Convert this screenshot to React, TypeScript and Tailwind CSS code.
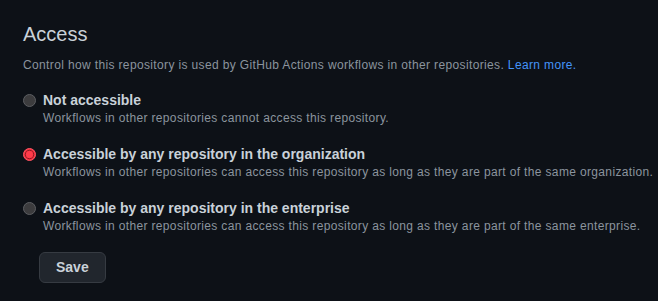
import { useState } from "react";

const options = [
  {
    id: "none",
    label: "Not accessible",
    description: "Workflows in other repositories cannot access this repository.",
  },
  {
    id: "organization",
    label: "Accessible by any repository in the organization",
    description:
      "Workflows in other repositories can access this repository as long as they are part of the same organization.",
  },
  {
    id: "enterprise",
    label: "Accessible by any repository in the enterprise",
    description:
      "Workflows in other repositories can access this repository as long as they are part of the same enterprise.",
  },
];

function Radio({ checked }: { checked: boolean }) {
  if (checked) {
    return (
      <svg width="13" height="13" viewBox="0 0 13 13" className="shrink-0">
        <circle cx="6.5" cy="6.5" r="6" fill="#f2303f" stroke="#ff5563" strokeWidth="1" />
        <circle cx="6.5" cy="6.5" r="4.2" fill="none" stroke="#8f1a23" strokeWidth="1" />
        <circle cx="6.5" cy="6.5" r="3.4" fill="#ff3b4a" />
      </svg>
    );
  }
  return (
    <svg width="13" height="13" viewBox="0 0 13 13" className="shrink-0">
      <circle cx="6.5" cy="6.5" r="6" fill="#3c3c3e" stroke="#5d5f63" strokeWidth="1" />
    </svg>
  );
}

export default function App() {
  const [selected, setSelected] = useState("organization");

  return (
    <div className="min-h-[301px] w-[658px] bg-[#0d1117] pl-[23px] pt-[19px] font-['Liberation_Sans',sans-serif]">
      {/* Header */}
      <h2 className="text-[20px] leading-[30px] text-[#c9d1d9]">Access</h2>
      <p className="mt-[7px] text-[12px] leading-[18px] tracking-[0.36px] text-[#8b949e]">
        Control how this repository is used by GitHub Actions workflows in other repositories.{" "}
        <a href="#" className="text-[#4493f8]">
          Learn more.
        </a>
      </p>

      {/* Options */}
      <div className="mt-[17px] flex flex-col gap-[19px]">
        {options.map((opt) => (
          <label key={opt.id} className="cursor-pointer" onClick={() => setSelected(opt.id)}>
            <div className="flex items-center gap-[7px]">
              <Radio checked={selected === opt.id} />
              <span className="text-[14px] font-bold leading-[19px] text-[#c9d1d9]">{opt.label}</span>
            </div>
            <div className="whitespace-nowrap pl-[20px] text-[12px] leading-4 tracking-[0.35px] text-[#8b949e]">
              {opt.description}
            </div>
          </label>
        ))}
      </div>

      {/* Save */}
      <button className="ml-4 mt-[18px] h-[31px] rounded-md border border-[#363b42] bg-[#21262d] px-4 text-[14px] font-bold text-[#c9d1d9]">
        Save
      </button>
    </div>
  );
}
